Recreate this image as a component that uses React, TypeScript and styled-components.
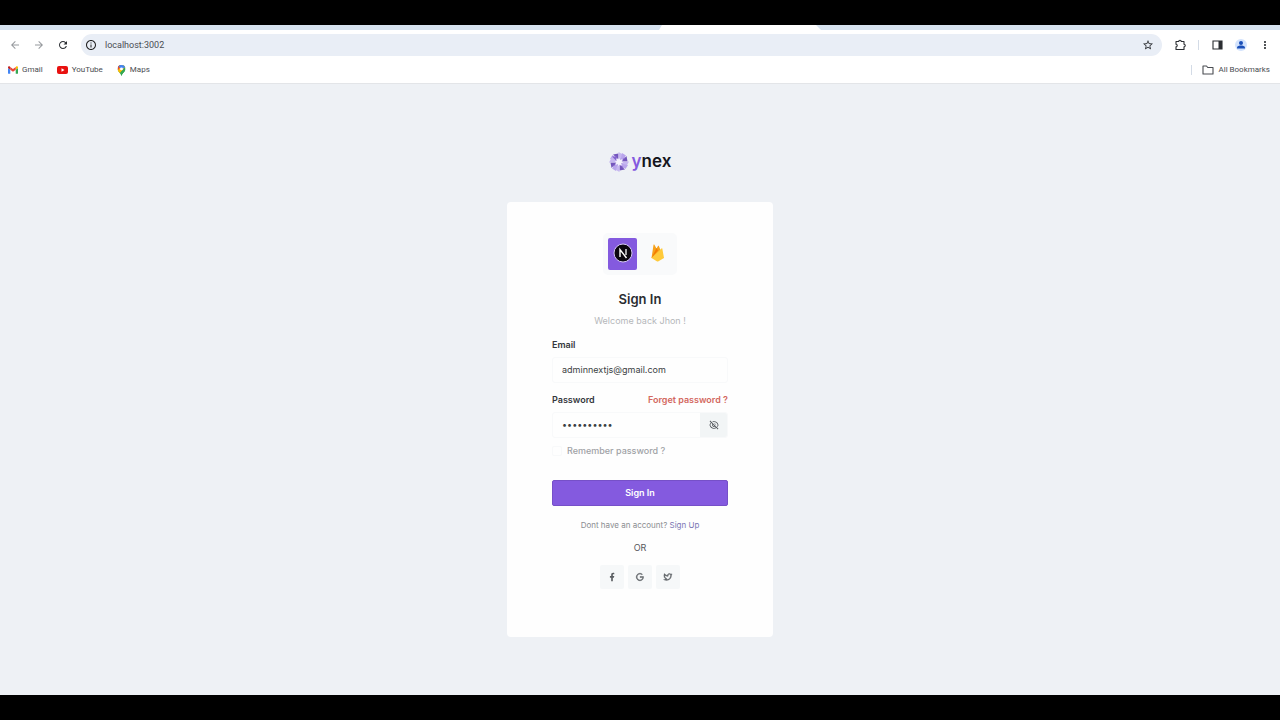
import React, { useState } from 'react';
import styled, { createGlobalStyle } from 'styled-components';
import {
  MdArrowBack,
  MdArrowForward,
  MdRefresh,
  MdInfoOutline,
  MdStarBorder,
  MdMoreVert,
} from 'react-icons/md';
import { RiFacebookFill, RiGoogleLine, RiTwitterLine, RiEyeOffLine } from 'react-icons/ri';

const GlobalStyle = createGlobalStyle`
  * { box-sizing: border-box; }
  body { margin: 0; background: #000; }
  button, input { font: inherit; margin: 0; }
  a { text-decoration: none; color: inherit; }
  svg { display: block; flex: none; }
`;

const Screen = styled.div`
  min-height: 100vh;
  padding: 25px 0;
  display: flex;
  flex-direction: column;
  background: #000;
`;

const Chrome = styled.header`
  background: #fff;
  border-bottom: 1px solid #e3e5e8;
  font-family: Roboto, 'Liberation Sans', sans-serif;
  color: #4a4d52;
`;

const TabStrip = styled.div`
  height: 5px;
  background: #d6e2ef;
  display: grid;
  grid-template-columns: 659fr 162fr 459fr;
`;

const ActiveTab = styled.div`
  grid-column: 2;
  background: #fff;
  clip-path: polygon(3px 0, calc(100% - 5px) 0, 100% 100%, 0 100%);
`;

const Toolbar = styled.div`
  height: 30px;
  padding: 0 9px;
  display: flex;
  align-items: center;
  gap: 12px;
`;

const ToolButton = styled.button<{ $faded?: boolean }>`
  width: 12px;
  height: 12px;
  padding: 0;
  border: 0;
  background: none;
  display: grid;
  place-items: center;
  color: ${(p) => (p.$faded ? '#96999d' : '#2b2e32')};
`;

const AddressBar = styled.div`
  flex: 1;
  min-width: 0;
  height: 22px;
  padding: 0 8px 0 4px;
  border-radius: 11px;
  background: #e9eef6;
  display: flex;
  align-items: center;
  gap: 8px;
  color: #222;
`;

const AddressInput = styled.input`
  flex: 1;
  min-width: 0;
  padding: 0;
  border: 0;
  outline: 0;
  background: none;
  font-size: 9px;
  line-height: 12px;
  color: #4a4d52;
`;

const Divider = styled.span`
  width: 1px;
  height: 10px;
  background: #d3dbe6;
`;

const Avatar = styled.button`
  width: 12px;
  height: 12px;
  padding: 0;
  border: 0;
  border-radius: 50%;
  background: #d3e3fd;
  color: #1a4fb8;
  display: grid;
  place-items: center;
`;

const Bookmarks = styled.nav`
  height: 23px;
  padding: 0 10px 3px 8px;
  display: flex;
  align-items: center;
  gap: 14px;
  font-size: 8px;
  line-height: 12px;
`;

const Bookmark = styled.a`
  display: flex;
  align-items: center;
  gap: 4px;
`;

const BookmarksEnd = styled.div`
  margin-left: auto;
  display: flex;
  align-items: center;
  gap: 10px;
`;

const Page = styled.main`
  flex: 1;
  padding: 67px 16px 56px;
  display: flex;
  flex-direction: column;
  align-items: center;
  gap: 29px;
  background: #eef1f5;
  font-family: Inter, 'Liberation Sans', sans-serif;
  font-size: 9px;
  line-height: 12px;
  color: #34373c;
`;

const Brand = styled.a`
  display: flex;
  align-items: center;
  gap: 3px;
  font-size: 17px;
  line-height: 20px;
  font-weight: 600;
  color: #14151c;
`;

const BrandText = styled.span`
  padding-bottom: 2px;
`;

const BrandAccent = styled.span`
  color: #845adf;
`;

const Card = styled.form`
  width: 100%;
  max-width: 266px;
  padding: 31px 45px 48px;
  border-radius: 4px;
  background: #fefefe;
  display: flex;
  flex-direction: column;
`;

const Switcher = styled.div`
  align-self: center;
  height: 42px;
  padding: 5px;
  border-radius: 5px;
  background: #f9fafb;
  display: flex;
  align-items: center;
  gap: 6px;
`;

const SwitchTab = styled.button<{ $active?: boolean }>`
  width: 29px;
  height: 32px;
  padding: 0 0 2px;
  border: 0;
  border-radius: 2px;
  background: ${(p) => (p.$active ? '#845adf' : 'transparent')};
  display: grid;
  place-items: center;
`;

const Title = styled.h1`
  margin: 14px 0 6px;
  text-align: center;
  font-size: 13px;
  line-height: 20px;
  font-weight: 600;
  color: #2a2c31;
`;

const Welcome = styled.p`
  margin: 0 0 12px;
  text-align: center;
  color: #b5b7ba;
`;

const LabelRow = styled.div`
  display: flex;
  justify-content: space-between;
  font-weight: 600;
  white-space: nowrap;
`;

const ForgotLink = styled.a`
  color: #d3685f;
`;

const Field = styled.div`
  height: 26px;
  margin: 6px 0 11px;
  border: 1px solid #f8f9fa;
  border-radius: 3px;
  display: flex;
  overflow: hidden;
`;

const PasswordField = styled(Field)`
  margin-bottom: 7px;
`;

const TextInput = styled.input`
  flex: 1;
  min-width: 0;
  padding: 0 9px;
  border: 0;
  outline: 0;
  background: none;
  color: #3b3e43;
`;

const RevealButton = styled.button`
  width: 27px;
  padding: 0;
  border: 0;
  background: #f2f5f6;
  color: #4f5358;
  display: grid;
  place-items: center;
`;

const Remember = styled.label`
  display: flex;
  align-items: center;
  gap: 5px;
  font-weight: 500;
  color: #a0a2a6;
`;

const CheckBox = styled.input`
  appearance: none;
  width: 10px;
  height: 10px;
  border: 1px solid #f8f9fa;
  border-radius: 2px;
  &:checked { background: #845adf; }
`;

const Submit = styled.button`
  height: 26px;
  margin: 23px 0 13px;
  border: 1px solid #7650c8;
  border-radius: 2px;
  background: #845adf;
  color: #fff;
  font-weight: 600;
`;

const Note = styled.p`
  margin: 0 0 11px;
  text-align: center;
  font-size: 8px;
  white-space: nowrap;
  color: #8b8d91;
`;

const SignUpLink = styled.a`
  color: #7d78b4;
`;

const Or = styled.p`
  margin: 0 0 11px;
  text-align: center;
  color: #55585c;
`;

const Socials = styled.div`
  display: flex;
  justify-content: center;
  gap: 4px;
`;

const SocialButton = styled.button`
  width: 24px;
  height: 24px;
  padding: 0;
  border: 0;
  border-radius: 2px;
  background: #f6f8f9;
  color: #5b5f63;
  display: grid;
  place-items: center;
`;

const GmailIcon = () => (
  <svg width="10" height="8" viewBox="0 0 22 17">
    <path d="M0 2v13.500C0 16.300.700 17 1.500 17H5V8L0 4z" fill="#4285f4" />
    <path d="M17 17h3.500c.800 0 1.500-.700 1.500-1.500V4l-5 4z" fill="#34a853" />
    <path d="M17 2v6l5-4V2.500C22 .300 19.500-.700 17.900.600z" fill="#fbbc04" />
    <path d="M5 8V2l6 4.500L17 2v6l-6 4.500z" fill="#ea4335" />
    <path d="M0 2.500V4l5 4V2L4.100.600C2.500-.700 0 .300 0 2.500z" fill="#c5221f" />
  </svg>
);

const YouTubeIcon = () => (
  <svg width="11" height="8" viewBox="0 0 22 16">
    <rect width="22" height="16" rx="4" fill="#e8110f" />
    <path d="M9 4.500v7l6-3.500z" fill="#fff" />
  </svg>
);

const MapsIcon = () => (
  <svg width="9" height="11" viewBox="0 0 18 24">
    <defs>
      <clipPath id="pin">
        <path d="M9 0a8.500 8.500 0 0 0-8.500 8.500C.500 14.500 6.500 16 9 24c2.500-8 8.500-9.500 8.500-15.500A8.500 8.500 0 0 0 9 0z" />
      </clipPath>
    </defs>
    <g clipPath="url(#pin)">
      <rect width="18" height="24" fill="#34a853" />
      <path d="M0 17V11L9 0h9v5L3 20z" fill="#fbbc04" />
      <path d="M0 0h8l-4 8-4 4z" fill="#ea4335" />
      <path d="M5 0h13v5L9 9 3 4z" fill="#4285f4" />
      <path d="M18 4v20H8l-1-8z" fill="#34a853" />
    </g>
    <circle cx="9" cy="8.500" r="3.200" fill="#fff" />
  </svg>
);

const FolderIcon = () => (
  <svg width="12" height="10" viewBox="0 0 24 20">
    <path d="M2 2h7l2.500 3H22v13H2z" fill="none" stroke="currentColor" strokeWidth="2.200" strokeLinejoin="round" />
  </svg>
);

const ExtensionIcon = () => (
  <svg width="12" height="12" viewBox="0 0 24 24">
    <path
      d="M4 5h5.500a2.500 2.500 0 0 1 5 0H20v5.500a2.500 2.500 0 0 1 0 5V21H4v-5.500a2.500 2.500 0 0 0 0-5z"
      fill="none"
      stroke="currentColor"
      strokeWidth="2.200"
      strokeLinejoin="round"
    />
  </svg>
);

const SidePanelIcon = () => (
  <svg width="11" height="10" viewBox="0 0 22 20">
    <path d="M2 2h18v16H2z" fill="none" stroke="currentColor" strokeWidth="2.200" />
    <path d="M13 2h7v16h-7z" fill="currentColor" />
  </svg>
);

const PersonIcon = () => (
  <svg width="10" height="10" viewBox="0 0 20 20">
    <circle cx="10" cy="6" r="4" fill="currentColor" />
    <path d="M2 17v-2c0-3 5-4 8-4s8 1 8 4v2z" fill="currentColor" />
  </svg>
);

const BrandMark = () => (
  <svg width="20" height="20" viewBox="-20 -20 40 40">
    {[0, 90, 180, 270].map((angle) => (
      <g key={angle} transform={`rotate(${angle})`}>
        <path d="M-1 -5L-12 -15L-1 -17z" fill="#7456bd" />
        <path d="M-1 -5L-1 -20L10 -14L3 -5z" fill="#c6b7f0" />
        <path d="M-2 -5L-13 -14L-18 -6L-7 -4z" fill="#b9a5ec" />
        <path d="M2 -5L11 -14L11 -4z" fill="#8465cf" />
      </g>
    ))}
    <path d="M0-9L2-4L7-6L5-1L9 1L4 2L6 7L1 5L-1 9L-2 4L-7 6L-5 1L-9-1L-4-2L-6-7L-1-5z" fill="#f4f2fc" />
  </svg>
);

const NextIcon = () => (
  <svg width="20" height="20" viewBox="0 0 40 40">
    <circle cx="20" cy="20" r="18" fill="#0b0710" stroke="#d5c8f2" strokeWidth="2" />
    <path d="M14 28V13l13 17" fill="none" stroke="#fff" strokeWidth="2.800" />
    <path d="M26 12v12" stroke="#fff" strokeWidth="2.600" />
  </svg>
);

const FirebaseIcon = () => (
  <svg width="13" height="18" viewBox="0 0 26 36">
    <path d="M1 28L5 2c.200-1 1.400-1.100 1.800-.300L11 9l3-5c.400-.800 1.400-.800 1.800 0L25 28z" fill="#f6a21c" />
    <path d="M1 28L14 13l-3-5z" fill="#f57c00" />
    <path d="M1 28L21 9c.600-.600 1.500-.300 1.700.500L26 28l-11 6.500c-1 .600-2.500.600-3.500 0z" fill="#ffca3a" />
  </svg>
);

export default function App() {
  const [visible, setVisible] = useState(false);

  return (
    <Screen>
      <GlobalStyle />
      <Chrome>
        <TabStrip>
          <ActiveTab />
        </TabStrip>
        <Toolbar>
          <ToolButton $faded aria-label="Back"><MdArrowBack size={12} /></ToolButton>
          <ToolButton $faded aria-label="Forward"><MdArrowForward size={12} /></ToolButton>
          <ToolButton aria-label="Reload"><MdRefresh size={12} /></ToolButton>
          <AddressBar>
            <MdInfoOutline size={12} />
            <AddressInput aria-label="Address" defaultValue="localhost:3002" />
            <ToolButton aria-label="Bookmark this page"><MdStarBorder size={12} /></ToolButton>
          </AddressBar>
          <ToolButton aria-label="Extensions"><ExtensionIcon /></ToolButton>
          <Divider />
          <ToolButton aria-label="Side panel"><SidePanelIcon /></ToolButton>
          <Avatar aria-label="Profile"><PersonIcon /></Avatar>
          <ToolButton aria-label="Menu"><MdMoreVert size={12} /></ToolButton>
        </Toolbar>
        <Bookmarks>
          <Bookmark href="#gmail"><GmailIcon />Gmail</Bookmark>
          <Bookmark href="#youtube"><YouTubeIcon />YouTube</Bookmark>
          <Bookmark href="#maps"><MapsIcon />Maps</Bookmark>
          <BookmarksEnd>
            <Divider />
            <Bookmark href="#bookmarks"><FolderIcon />All Bookmarks</Bookmark>
          </BookmarksEnd>
        </Bookmarks>
      </Chrome>

      <Page>
        <Brand href="#home">
          <BrandMark />
          <BrandText><BrandAccent>y</BrandAccent>nex</BrandText>
        </Brand>
        <Card onSubmit={(e) => e.preventDefault()}>
          <Switcher>
            <SwitchTab type="button" $active aria-label="Next.js"><NextIcon /></SwitchTab>
            <SwitchTab type="button" aria-label="Firebase"><FirebaseIcon /></SwitchTab>
          </Switcher>
          <Title>Sign In</Title>
          <Welcome>Welcome back Jhon !</Welcome>
          <LabelRow>
            <label htmlFor="email">Email</label>
          </LabelRow>
          <Field>
            <TextInput id="email" type="email" defaultValue="adminnextjs@gmail.com" />
          </Field>
          <LabelRow>
            <label htmlFor="password">Password</label>
            <ForgotLink href="#forgot">Forget password ?</ForgotLink>
          </LabelRow>
          <PasswordField>
            <TextInput id="password" type={visible ? 'text' : 'password'} defaultValue="1234567890" />
            <RevealButton type="button" aria-label="Show password" onClick={() => setVisible(!visible)}>
              <RiEyeOffLine size={10} />
            </RevealButton>
          </PasswordField>
          <Remember>
            <CheckBox type="checkbox" />
            Remember password ?
          </Remember>
          <Submit type="submit">Sign In</Submit>
          <Note>Dont have an account? <SignUpLink href="#signup">Sign Up</SignUpLink></Note>
          <Or>OR</Or>
          <Socials>
            <SocialButton type="button" aria-label="Facebook"><RiFacebookFill size={10} /></SocialButton>
            <SocialButton type="button" aria-label="Google"><RiGoogleLine size={10} strokeWidth={1} /></SocialButton>
            <SocialButton type="button" aria-label="Twitter"><RiTwitterLine size={10} strokeWidth={1} /></SocialButton>
          </Socials>
        </Card>
      </Page>
    </Screen>
  );
}
